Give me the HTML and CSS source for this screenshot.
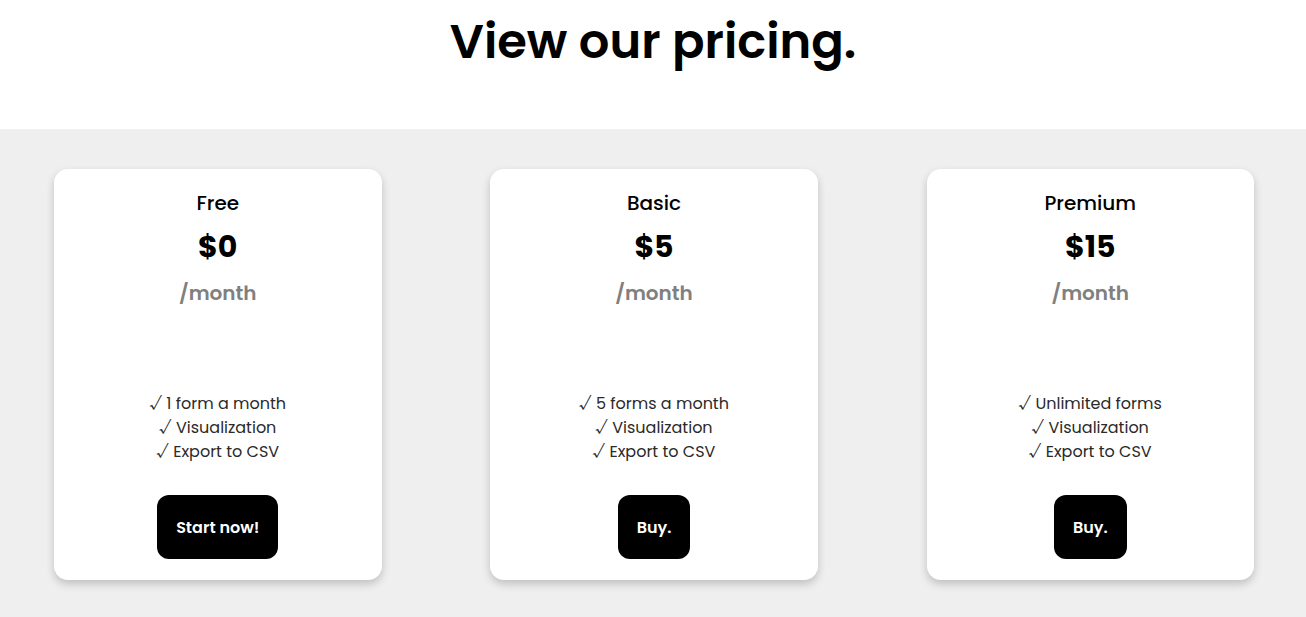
FILE: index.html
```html
<!DOCTYPE html>
<html lang="en">

<head>
    <meta charset="UTF-8">
    <meta name="viewport" content="width=device-width, initial-scale=1.0">
    <title>Pricing</title>
    <link rel="stylesheet" href="styles.css">
</head>

<body>
    <!-- Page Title -->
    <header class="title">
        <h1>View our pricing.</h1>
    </header>

    <!-- Pricing Plans -->
    <section class="pricing">
        <div class="plan">
            <h3>Free</h3>
            <div class="price">$0</div>
            <div class="period">/month</div>
            <ul class="features">
                <li>&radic; 1 form a month</li>
                <li>&radic; Visualization</li>
                <li>&radic; Export to CSV</li>
            </ul>
            <button class="plan-btn">Start now!</button>
        </div>

        <div class="plan">
            <h3>Basic</h3>
            <div class="price">$5</div>
            <div class="period">/month</div>
            <ul class="features">
                <li>&radic; 5 forms a month</li>
                <li>&radic; Visualization</li>
                <li>&radic; Export to CSV</li>
            </ul>
            <button class="plan-btn">Buy.</button>
        </div>

        <div class="plan">
            <h3>Premium</h3>
            <div class="price">$15</div>
            <div class="period">/month</div>
            <ul class="features">
                <li>&radic; Unlimited forms</li>
                <li>&radic; Visualization</li>
                <li>&radic; Export to CSV</li>
            </ul>
            <button class="plan-btn">Buy.</button>
        </div>
    </section>
</body>

</html>
```

FILE: styles.css
```css
/* General Styling */
body {
    margin: 0;
    padding: 0;
    font-family: 'Poppins', 'Inter', sans-serif;
    color: #000;
    background-color: #fff;
}

/* Title */
.title {
    height: 129px;
    display: flex;
    justify-content: center;
}

.title h1 {
    margin: 0;
    padding-top: 12px;
    font-size: 48px;
    font-weight: 600;
    line-height: 60px;
}

/* Pricing Section */
.pricing {
    background-color: #efefef;
    display: flex;
    justify-content: space-between;
    align-items: flex-start;
    padding: 40px 52px 60px 54px;
}

.plan {
    width: 327.5px;
    background-color: #fff;
    border-radius: 14px;
    box-shadow: 0 4px 8px rgba(0, 0, 0, 0.2);
    padding: 19px 0 21px;
    display: flex;
    flex-direction: column;
    align-items: center;
    text-align: center;
}

.plan h3 {
    margin: 0;
    font-size: 20px;
    font-weight: 500;
    line-height: 30px;
}

.price {
    margin-top: 11px;
    font-size: 30px;
    font-weight: 700;
    line-height: 36px;
}

.period {
    margin-top: 13px;
    font-size: 20px;
    font-weight: 600;
    line-height: 30px;
    color: #808080;
}

.features {
    list-style: none;
    margin: 84px 0 0;
    padding: 0;
    font-size: 16px;
    line-height: 24px;
    color: #2a2a2a;
}

.plan-btn {
    margin-top: 31px;
    padding: 0 19px;
    height: 64px;
    border: none;
    border-radius: 12px;
    background-color: #000;
    color: #fff;
    font-family: inherit;
    font-size: 16px;
    font-weight: 600;
    cursor: pointer;
}
```
